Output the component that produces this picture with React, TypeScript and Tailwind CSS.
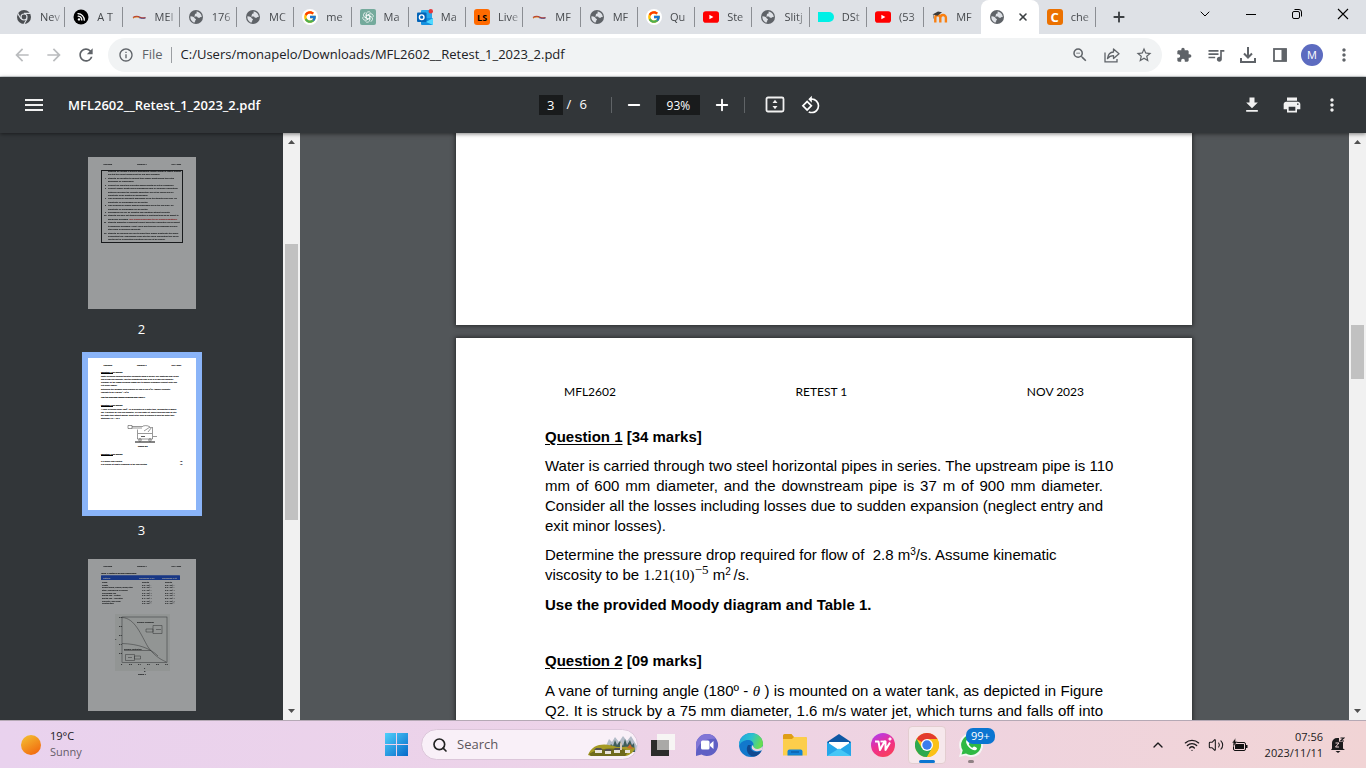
import type { ReactNode } from "react";
import {
  MdArrowBack,
  MdArrowForward,
  MdFileDownload,
  MdInfoOutline,
  MdMenu,
  MdMoreVert,
  MdPrint,
  MdQueueMusic,
  MdRefresh,
  MdRotate90DegreesCcw,
  MdStarBorder,
  MdZoomOut,
} from "react-icons/md";
import { FcGoogle } from "react-icons/fc";
import { ChevronDown, ChevronUp, Minus, Plus, Search, Volume2, Wifi, X } from "lucide-react";

/* ---------- favicons ---------- */

const Globe = () => (
  <svg viewBox="0 0 16 16" className="size-4">
    <circle cx="8" cy="8" r="7" fill="#5f6368" />
    <path d="M8.500 2.300c1.300.2 2.500.8 3.400 1.700-.2 1-.8 1.400-1.700 1.500-.5 1.300-1.500 1-2 1.500-.2 1 .6.8 2 .8 1 0 1.300.9 1.300 1.700 1 .2 1.900-.1 2.100-.3-.3 1.500-1.500 3.300-3 4-.9-.3-.7-1.500-1.300-2.300-1.200-.3-1.500-1-1.400-2-1.200-.4-1.200-1.200-2-1.900C5 6.200 4 6.500 3 6.200 4 3.800 6.200 2.300 8.500 2.300z" fill="#5f6368" />
    <path d="M8.600 2.400c-.4.900.3 1.100.2 1.800-1 .3-1.800.3-2 1.200.5.900 0 1.300-.8 1.500.3.800 1.100.5 2 .6 1.100 0 1.600.5 1.900 1.300 1.100.1 2.100.1 2.500-.8.600-.1 1.100 0 1.400.2C13.800 5.300 11.600 2.700 8.600 2.400z" fill="#dee1e6" />
    <path d="M2.400 7.400c1.600-.2 3.500.6 4.200 1.700.1.900 1.300.5 1.400 1.400-.3.800-.9.900-.8 1.800-.3.400-.5.800-.5 1.300C4.200 13 2.100 10.500 2.400 7.400z" fill="#dee1e6" />
  </svg>
);

const ChromeGrey = () => (
  <svg viewBox="0 0 16 16" className="size-4">
    <circle cx="8" cy="8" r="7" fill="#4a4d51" />
    <circle cx="8" cy="8" r="3.6" fill="#dee1e6" />
    <circle cx="8" cy="8" r="2.4" fill="#4a4d51" />
    <path d="M8 4.4H14.4M4.9 9.8 1.7 4.4M11.1 9.8 7.9 15.2" stroke="#dee1e6" strokeWidth="1.1" />
  </svg>
);

const BlackDot = () => (
  <svg viewBox="0 0 16 16" className="size-4">
    <circle cx="8" cy="8" r="7.5" fill="#000" />
    <g fill="none" stroke="#fff" strokeWidth="1.3" strokeLinecap="round">
      <path d="M5 4.6a6.5 6.5 0 0 1 6.3 6.6M5.2 7.2a4 4 0 0 1 3.6 3.8" />
    </g>
    <circle cx="6" cy="10.4" r="1.2" fill="#fff" />
  </svg>
);

const Wave = () => (
  <svg viewBox="0 0 16 16" className="size-4">
    <path d="M2 8.600C4.500 7 6.500 7 8.500 8S12.500 9.200 14.500 8.600" fill="none" stroke="#b3392f" strokeWidth="1.300" />
    <path d="M2 9.200C4 8 6 7.800 8 8.600" fill="none" stroke="#e08a2c" strokeWidth="0.800" />
    <path d="M8 8.600C10 9.700 12.500 9.700 14.500 8.900" fill="none" stroke="#44407f" strokeWidth="0.800" />
  </svg>
);

const GoogleFav = () => (
  <span className="grid size-4 place-items-center rounded-full bg-white">
    <FcGoogle className="size-[14px]" />
  </span>
);

const ChatFav = () => (
  <svg viewBox="0 0 16 16" className="size-4">
    <rect width="16" height="16" rx="2" fill="#74aa9c" />
    <g fill="none" stroke="#fff" strokeWidth="0.7">
      {[0, 60, 120, 180, 240, 300].map((a) => (
        <path key={a} transform={`rotate(${a} 8 8)`} d="M6.200 9V5.200a2.500 2.500 0 0 1 4.300-1.700M6.200 6.900 9.500 5" />
      ))}
    </g>
  </svg>
);

const OutlookFav = () => (
  <svg viewBox="0 0 16 16" className="size-4">
    <rect x="4" y="1" width="11" height="12" rx="1" fill="#28a8ea" />
    <path d="M4 9h12v6a1 1 0 0 1-1 1H5a1 1 0 0 1-1-1z" fill="#1490df" />
    <path d="m16 9-7 4 7 3z" fill="#50d9ff" />
    <rect x="0" y="3.500" width="9.500" height="9.500" rx="1" fill="#0364b8" />
    <circle cx="4.700" cy="8.200" r="2.300" fill="none" stroke="#fff" strokeWidth="1.400" />
    <circle cx="13.800" cy="2.200" r="2.200" fill="#e5393b" />
  </svg>
);

const LetterFav = ({ label, className }: { label: string; className: string }) => (
  <span className={`grid size-4 place-items-center rounded-[3px] font-bold leading-none ${className}`}>{label}</span>
);

const YouTube = () => (
  <svg viewBox="0 0 16 16" className="size-4">
    <rect y="2.300" width="16" height="11.400" rx="2.800" fill="#f00" />
    <path d="M6.400 5.700v4.600L10.400 8z" fill="#fff" />
  </svg>
);

const Dstv = () => (
  <svg viewBox="0 0 16 16" className="size-4">
    <path d="M0 3h11a5 5 0 0 1 0 10H0z" fill="#00f0e6" />
  </svg>
);

const Moodle = () => (
  <svg viewBox="0 0 16 16" className="size-4">
    <path d="M3.300 13.500V8.800a2.500 2.500 0 0 1 5 0v4.700M8.300 8.800a2.700 2.700 0 0 1 5.600 0v4.700" fill="none" stroke="#f98012" strokeWidth="2.400" />
    <path d="M0.500 5.500 6 2.500l4 .8-4.500 3.500z" fill="#3c3c3c" />
    <path d="M1.500 5.500v4" stroke="#777" strokeWidth="0.700" />
  </svg>
);

/* ---------- tab strip ---------- */

type Tab = { title: string; icon: ReactNode; active?: boolean };

const tabs: Tab[] = [
  { title: "Nev", icon: <ChromeGrey /> },
  { title: "A T", icon: <BlackDot /> },
  { title: "MEI", icon: <Wave /> },
  { title: "176", icon: <Globe /> },
  { title: "MC", icon: <Globe /> },
  { title: "me", icon: <GoogleFav /> },
  { title: "Ma", icon: <ChatFav /> },
  { title: "Ma", icon: <OutlookFav /> },
  { title: "Live", icon: <LetterFav label="LS" className="bg-[#ff6a00] text-[9px] text-black" /> },
  { title: "MF", icon: <Wave /> },
  { title: "MF", icon: <Globe /> },
  { title: "Qu", icon: <GoogleFav /> },
  { title: "Ste", icon: <YouTube /> },
  { title: "Slitj", icon: <Globe /> },
  { title: "DSt", icon: <Dstv /> },
  { title: "(53", icon: <YouTube /> },
  { title: "MF", icon: <Moodle /> },
  { title: "", icon: <Globe />, active: true },
  { title: "che", icon: <LetterFav label="C" className="bg-[#eb7100] text-[13px] text-white" /> },
];

function TabStrip() {
  return (
    <div className="flex h-[34px] shrink-0 bg-[#dee1e6] pl-2">
      <div role="tablist" className="grid w-[1088px] min-w-0 auto-cols-fr grid-flow-col">
        {tabs.map((t, i) =>
          t.active ? (
            <div key={i} className="flex min-w-0 items-center justify-between rounded-t-lg bg-white px-2">
              {t.icon}
              <button aria-label="Close tab" className="grid size-4 place-items-center text-[#3c4043]">
                <X className="size-3" strokeWidth={3.200} />
              </button>
            </div>
          ) : (
            <button key={i} role="tab" className="flex min-w-0 items-center pl-2 text-left text-[11px] text-[#45484c]">
              <span className="mr-2 shrink-0">{t.icon}</span>
              <span className="min-w-0 flex-1 whitespace-nowrap [mask-image:linear-gradient(to_right,black_60%,rgba(0,0,0,0.3))]">
                {t.title}
              </span>
              <span className={`ml-1 h-5 w-px shrink-0 ${tabs[i + 1]?.active ? "" : "bg-[#8b8e93]"}`} />
            </button>
          ),
        )}
      </div>
      <button aria-label="New tab" className="grid w-[46px] place-items-center text-[#3c4043]">
        <Plus className="size-4" strokeWidth={2.800} />
      </button>
      <div className="ml-auto flex h-7 text-black">
        <button aria-label="Search tabs" className="grid w-[46px] place-items-center">
          <ChevronDown className="size-4" strokeWidth={1.500} />
        </button>
        <button aria-label="Minimize" className="grid w-[46px] place-items-center">
          <span className="h-px w-[10px] bg-black" />
        </button>
        <button aria-label="Restore" className="grid w-[46px] place-items-center">
          <svg viewBox="0 0 12 12" className="size-3" fill="none" stroke="#000">
            <rect x="1.500" y="3.500" width="7" height="7" rx="1.500" />
            <path d="M3.500 1.500h4.500a2.500 2.500 0 0 1 2.500 2.500v4.500" />
          </svg>
        </button>
        <button aria-label="Close" className="grid w-[46px] place-items-center">
          <svg viewBox="0 0 12 12" className="size-3" stroke="#000" strokeWidth="1.100">
            <path d="m1 1 10 10M11 1 1 11" />
          </svg>
        </button>
      </div>
    </div>
  );
}

/* ---------- address bar ---------- */

const BarButton = ({ label, children }: { label: string; children: ReactNode }) => (
  <button aria-label={label} className="grid size-8 shrink-0 place-items-center">
    {children}
  </button>
);

function AddressBar() {
  return (
    <div className="flex h-[43px] shrink-0 items-center border-b border-[#d8dcdf] bg-white px-[6px] text-[#5f6368]">
      <BarButton label="Back"><MdArrowBack className="size-5 text-[#babcbe]" /></BarButton>
      <BarButton label="Forward"><MdArrowForward className="size-5 text-[#babcbe]" /></BarButton>
      <BarButton label="Reload"><MdRefresh className="size-5" /></BarButton>
      <div className="mx-[6px] flex h-[34px] min-w-0 flex-1 items-center rounded-full bg-[#f1f3f4] pl-[10px] pr-[2px]">
        <MdInfoOutline className="size-4 shrink-0" />
        <label htmlFor="url" className="ml-2 text-[13px]">File</label>
        <span className="ml-2 h-4 w-px bg-[#9b9ea2]" />
        <input
          id="url"
          defaultValue="C:/Users/monapelo/Downloads/MFL2602__Retest_1_2023_2.pdf"
          className="ml-[9px] min-w-0 flex-1 bg-transparent text-[13px] text-[#202124] outline-none"
        />
        <BarButton label="Zoom"><MdZoomOut className="size-[18px]" /></BarButton>
        <BarButton label="Share">
          <svg viewBox="0 0 18 18" className="size-[18px]" fill="none" stroke="#5f6368" strokeWidth="1.300">
            <path d="M2 6.500v9.300h12v-2.800" />
            <path d="M10.500 3v3C7 6.200 5 8.500 4.500 12.500 6 10.500 8 9.600 10.500 9.600v3L16 7.800z" strokeLinejoin="round" />
          </svg>
        </BarButton>
        <BarButton label="Bookmark"><MdStarBorder className="size-[18px]" /></BarButton>
      </div>
      <BarButton label="Extensions">
        <svg viewBox="0 0 24 24" className="size-4" fill="#5f6368">
          <path d="M20.5 11H19V7c0-1.100-.9-2-2-2h-4V3.500C13 2.120 11.880 1 10.500 1S8 2.120 8 3.500V5H4c-1.100 0-1.990.9-1.990 2v3.800H3.500c1.490 0 2.700 1.210 2.700 2.700s-1.210 2.700-2.700 2.700H2V20c0 1.100.9 2 2 2h3.800v-1.500c0-1.490 1.210-2.700 2.700-2.700s2.700 1.210 2.700 2.700V22H17c1.100 0 2-.9 2-2v-4h1.500c1.380 0 2.500-1.120 2.500-2.500S21.880 11 20.500 11z" />
        </svg>
      </BarButton>
      <BarButton label="Media"><MdQueueMusic className="size-5" /></BarButton>
      <BarButton label="Downloads">
        <svg viewBox="0 0 16 16" className="size-4" fill="none" stroke="#5f6368" strokeWidth="2">
          <path d="M8 0v10M4 6.500l4 4 4-4M1 11v4h14v-4" />
        </svg>
      </BarButton>
      <BarButton label="Side panel">
        <svg viewBox="0 0 14 14" className="size-[14px]">
          <rect x="1" y="1" width="12" height="12" fill="none" stroke="#5f6368" strokeWidth="1.800" />
          <rect x="8.500" y="1" width="5" height="12" fill="#5f6368" />
        </svg>
      </BarButton>
      <BarButton label="Profile">
        <span className="grid size-[22px] place-items-center rounded-full bg-[#5c6bc0] text-[11px] text-white">M</span>
      </BarButton>
      <BarButton label="Menu"><MdMoreVert className="size-5" /></BarButton>
    </div>
  );
}

/* ---------- PDF toolbar ---------- */

function PdfToolbar() {
  return (
    <header className="relative z-10 grid h-14 shrink-0 grid-cols-[1fr_auto_1fr] items-center bg-[#323639] px-[18px] text-[#f1f1f1] shadow-[0_1px_4px_rgba(0,0,0,0.5)]">
      <div className="flex items-center gap-[18px]">
        <BarButton label="Toggle sidebar"><MdMenu className="size-6" /></BarButton>
        <h1 className="pt-[2px] text-[13px] font-semibold text-white">MFL2602__Retest_1_2023_2.pdf</h1>
      </div>
      <div className="flex items-center text-[13px] text-white">
        <input aria-label="Page" defaultValue="3" className="h-5 w-6 bg-[#191b1c] text-center outline-none" />
        <span className="ml-1">/</span>
        <span className="ml-2 w-8">6</span>
        <span className="ml-auto h-4 w-px bg-[#606467]" />
        <span className="ml-[6px] flex items-center gap-[6px]">
          <BarButton label="Zoom out"><Minus className="size-[18px]" strokeWidth={2.500} /></BarButton>
          <input aria-label="Zoom level" defaultValue="93%" className="h-5 w-11 bg-[#191b1c] text-center text-xs outline-none" />
          <BarButton label="Zoom in"><Plus className="size-[18px]" strokeWidth={2.500} /></BarButton>
          <span className="h-4 w-px bg-[#606467]" />
        </span>
        <span className="ml-[14px] flex gap-1">
          <BarButton label="Fit to page">
            <svg viewBox="0 0 20 18" className="h-[18px] w-5">
              <rect x="1.500" y="1.500" width="17" height="14" rx="1.500" fill="none" stroke="#f1f1f1" strokeWidth="1.800" />
              <path d="M10 3.700 7.500 7h5zM10 13.300 7.500 10h5z" fill="#f1f1f1" />
            </svg>
          </BarButton>
          <BarButton label="Rotate"><MdRotate90DegreesCcw className="size-5" /></BarButton>
        </span>
      </div>
      <div className="flex justify-end gap-2">
        <BarButton label="Download"><MdFileDownload className="size-5" /></BarButton>
        <BarButton label="Print"><MdPrint className="size-5" /></BarButton>
        <BarButton label="More"><MdMoreVert className="size-5" /></BarButton>
      </div>
    </header>
  );
}

/* ---------- thumbnails ---------- */

type Line = [x: number, y: number, text: string, bold?: boolean];

const MiniText = ({ lines, fill = "#000" }: { lines: Line[]; fill?: string }) => (
  <g fill={fill} stroke={fill} strokeWidth="0.100" fontFamily="Liberation Sans, Arial, sans-serif" fontSize="2.050">
    {lines.map(([x, y, text, bold]) => (
      <text key={`${x}-${y}`} x={x} y={y} fontWeight={bold ? 700 : 400}>{text}</text>
    ))}
  </g>
);

const ThumbPage = ({ children }: { children: ReactNode }) => (
  <svg viewBox="0 0 108 152" className="h-[152px] w-[108px]" aria-hidden="true">
    <MiniText lines={[[15.500, 8, "MFL2602"], [49, 8, "RETEST 1"], [83.500, 8, "NOV 2023"]]} />
    {children}
  </svg>
);

const rules: Line[] = [
  [20, 15.300, "Students are advised to preview submissions (answer scripts) to ensure legibility"],
  [20, 18.200, "and that the correct answer script file has been uploaded."],
  [17, 22, "4"], [20, 22, "Students are permitted to resubmit their answer scripts should their initial"],
  [20, 25.200, "submission be unsuccessful."],
  [17, 29, "5"], [20, 29, "Incorrect file format and uncollated answer scripts will not be considered."],
  [17, 32.200, "6"], [20, 32.200, "Incorrect answer scripts and/or submissions made on unofficial examinations"],
  [20, 36, "platforms (including the invigilator application) will not be marked and no"],
  [20, 39.200, "opportunity will be granted for resubmission."],
  [17, 42.200, "7"], [20, 42.200, "Mark awarded for incomplete submission will be the student's final mark. No"],
  [20, 46, "opportunity for resubmission will be granted."],
  [17, 49.200, "8"], [20, 49.200, "Mark awarded for illegible scanned submission will be the final mark. No"],
  [20, 53, "opportunity for resubmission will be granted."],
  [17, 56.200, "9"], [20, 56.200, "Submissions will only be accepted from registered student accounts."],
  [16, 59.200, "10"], [20, 59.200, "Students who have not utilised invigilation or proctoring tools will be subject to"],
  [20, 63.200, "disciplinary processes."],
  [16, 66.200, "11"], [20, 66.200, "Students suspected of dishonest conduct during the examination will be subject"],
  [20, 70.200, "to disciplinary processes. UNISA has a zero tolerance for plagiarism and any"],
  [20, 73.200, "other forms of academic dishonesty."],
  [16, 77.200, "12"], [20, 77.200, "Students are provided one hour to submit their answer scripts after the official"],
  [20, 80.200, "examination time. Submissions made after the official examination time will be"],
  [20, 83.200, "rejected by the examination regulations and will not be marked."],
];

const ThumbTwo = () => (
  <ThumbPage>
    <MiniText lines={rules} />
    <MiniText fill="#d21414" lines={[[41, 63.200, "(only modules applicable to your modules registered)."]]} />
    <rect x="13.500" y="13.500" width="81" height="72" fill="none" stroke="#000" />
  </ThumbPage>
);

const pageLines: Line[] = [
  [13, 15, "Question 1 [34 marks]", true],
  [13, 19, "Water is carried through two steel horizontal pipes in series. The upstream pipe is 110"],
  [13, 22, "mm of 600 mm diameter, and the downstream pipe is 37 m of 900 mm diameter."],
  [13, 25, "Consider all the losses including losses due to sudden expansion (neglect entry and"],
  [13, 28, "exit minor losses)."],
  [13, 32, "Determine the pressure drop required for flow of 2.8 m³/s. Assume kinematic"],
  [13, 35, "viscosity to be 1.21(10)⁻⁵ m²/s."],
  [13, 40, "Use the provided Moody diagram and Table 1.", true],
  [13, 48, "Question 2 [09 marks]", true],
  [13, 52, "A vane of turning angle (180º - θ) is mounted on a water tank, as depicted in Figure"],
  [13, 55, "Q2. It is struck by a 75 mm diameter, 1.6 m/s water jet, which turns and falls off into"],
  [13, 58, "the water tank without spilling. What is the force F required to hold the water tank"],
  [13, 61, "stationary if θ = 45°?"],
  [50, 89, "Figure Q2", true],
  [13, 97, "Question 3 [05 marks]", true],
  [13, 104, "3.1 Define flow cavities."],
  [92, 104, "(2)"],
  [13, 107, "3.2 Provide at least 3 examples of the flow cavities."],
  [92, 107, "(3)"],
];

const ThumbThree = () => (
  <ThumbPage>
    <MiniText lines={pageLines} />
    <path d="M13 15.500h12M13 48.500h12M13 97.500h12" stroke="#000" />
    <g fill="none" stroke="#333" strokeWidth="0.500">
      <path d="M40 67.500h4v3h-4zM44 68.500h11M44 70h10M55 68c4-1 6 0 8 2M49.500 71.500v9.500h15V69M50 75.500h14M56 73l6-4M60 74l4-5M65 78.500h4" />
      <circle cx="52" cy="82" r="1.300" />
      <circle cx="62" cy="82" r="1.300" />
      <path d="M47 84h20" strokeWidth="1.200" />
      <path d="M53 78.500h4" strokeWidth="0.800" />
    </g>
  </ThumbPage>
);

const materials: [string, string, string][] = [
  ["Glass", "Smooth", "Smooth"],
  ["Plastic", "3.0 × 10⁻⁷", "1.0 × 10⁻⁶"],
  ["Drawn tubing; copper, brass, steel", "1.5 × 10⁻⁶", "5.0 × 10⁻⁶"],
  ["Steel, commercial or welded", "4.6 × 10⁻⁵", "1.5 × 10⁻⁴"],
  ["Galvanized iron", "1.5 × 10⁻⁴", "5.0 × 10⁻⁴"],
  ["Ductile iron—coated", "1.2 × 10⁻⁴", "4.0 × 10⁻⁴"],
  ["Ductile iron—uncoated", "2.4 × 10⁻⁴", "8.0 × 10⁻⁴"],
  ["Concrete, well made", "1.2 × 10⁻⁴", "4.0 × 10⁻⁴"],
  ["Riveted steel", "1.8 × 10⁻³", "6.0 × 10⁻³"],
];

const tableLines: Line[] = materials.flatMap(([name, metric, imperial], i): Line[] => {
  const y = 24.200 + i * 2.620;
  return [[14, y, name], [54, y, metric], [77, y, imperial]];
});

const ThumbFour = () => (
  <ThumbPage>
    <MiniText lines={[[13, 15, "Table 1: Material surface Roughness", true], ...tableLines]} />
    <rect x="13" y="16.300" width="79" height="4.700" rx="0.500" fill="#0038d0" />
    <MiniText fill="#dfe8ff" lines={[[15, 19.800, "Material"], [51, 19.800, "Roughness ε (m)"], [74, 19.800, "Roughness ε (ft)"]]} />
    <rect x="27" y="55" width="55" height="57" fill="#f1f3ee" />
    <g fill="none" stroke="#333" strokeWidth="0.500">
      <rect x="34" y="58" width="45" height="45.500" />
      <path d="M34 58.500C47 59 53 76 60 88 65 95 71 100 78.500 103" />
      <path d="M34 84.500C50 85 62 89 70 97" />
      <path d="M58 70h7v3h-7zM65 66.500h9v8h-9zM37.500 95.500h9v6h-9zM46.500 97h6v3h-6zM68 70.500h5M40 98.500h4M36 91.500h27" />
    </g>
    <MiniText
      lines={[
        [49, 64.200, "Sudden expansion"], [36, 91.300, "Sudden contraction"], [31, 59, "1.0"], [31, 68, "0.8"], [31, 77, "0.6"],
        [31, 86, "0.4"], [31, 95, "0.2"], [33, 106, "0"], [41, 106, "0.2"], [50, 106, "0.4"], [59, 106, "0.6"], [68, 106, "0.8"],
        [77, 106, "1.0"], [27, 81, "K"], [56, 110, "d"], [56, 112.500, "D"], [50, 115.500, "Figure 1", true],
      ]}
    />
  </ThumbPage>
);

const thumbs = [
  { page: 2, art: <ThumbTwo /> },
  { page: 3, art: <ThumbThree />, selected: true },
  { page: 4, art: <ThumbFour /> },
];

const Scrollbar = ({ thumb }: { thumb: string }) => (
  <div className="flex w-[17px] shrink-0 flex-col items-center bg-[#f1f1f1]">
    <svg viewBox="0 0 17 17" className="size-[17px] shrink-0"><path d="M5 11h7L8.500 7z" fill="#505050" /></svg>
    <div className="min-h-0 flex-1">
      <div className={`w-[13px] bg-[#c1c1c1] ${thumb}`} />
    </div>
    <svg viewBox="0 0 17 17" className="size-[17px] shrink-0"><path d="M5 6h7l-3.500 4z" fill="#505050" /></svg>
  </div>
);

function Sidebar() {
  return (
    <aside className="flex w-[300px] shrink-0 bg-[#323639]">
      <div className="flex min-w-0 flex-1 flex-col items-center overflow-hidden pt-6">
        {thumbs.map((t) => (
          <button key={t.page} aria-label={`Page ${t.page}`} className="mb-[9px] flex flex-col items-center gap-[10px]">
            <span className={t.selected ? "bg-white ring-6 ring-[#8ab4f8]" : "bg-white opacity-50"}>{t.art}</span>
            <span className="h-[30px] text-[13px] leading-5 text-white">{t.page}</span>
          </button>
        ))}
      </div>
      <Scrollbar thumb="mt-[94px] h-[276px]" />
    </aside>
  );
}

/* ---------- document ---------- */

const Justified = ({ lines }: { lines: string[] }) => (
  <>
    {lines.map((l) => (
      <span key={l} className="block whitespace-nowrap [text-align-last:justify]">{l}</span>
    ))}
  </>
);

function Document() {
  return (
    <main className="flex min-w-0 flex-1 bg-[#525659]">
      <div className="flex min-w-0 flex-1 flex-col items-center overflow-hidden pr-px">
        <div className="h-48 w-[736px] shrink-0 bg-white shadow-[0_0_4px_1px_rgba(0,0,0,0.5)]" />
        <article className="mt-[13px] w-[736px] shrink-0 bg-white px-[89px] pb-24 pt-11 font-['Liberation_Sans',Arial,sans-serif] text-[15px] leading-5 text-black shadow-[0_0_4px_1px_rgba(0,0,0,0.5)]">
          <div className="flex justify-between px-[19px] font-[Lato,sans-serif] text-xs leading-5">
            <span>MFL2602</span>
            <span>RETEST 1</span>
            <span>NOV 2023</span>
          </div>
          <h2 className="mt-[25px] font-bold"><span className="underline underline-offset-2">Question 1</span> [34 marks]</h2>
          <p className="mt-[9px]">
            <Justified
              lines={[
                "Water is carried through two steel horizontal pipes in series. The upstream pipe is 110",
                "mm of 600 mm diameter, and the downstream pipe is 37 m of 900 mm diameter.",
                "Consider all the losses including losses due to sudden expansion (neglect entry and",
              ]}
            />
            exit minor losses).
          </p>
          <p className="mt-[9px]">
            Determine the pressure drop required for flow of&nbsp; 2.8 m<sup className="text-[10px] leading-none">3</sup>/s. Assume kinematic
            <br />
            viscosity to be <span className="font-['Liberation_Serif',serif]">1.21(10)<sup className="text-[13px] leading-none">−5</sup></span> m
            <sup className="text-[10px] leading-none">2 </sup>/s.
          </p>
          <p className="mt-[10px] font-bold">Use the provided Moody diagram and Table 1.</p>
          <h2 className="mt-9 font-bold"><span className="underline underline-offset-2">Question 2</span> [09 marks]</h2>
          <p className="mt-[10px]">
            <span className="block whitespace-nowrap [text-align-last:justify]">
              A vane of turning angle (180º - <i className="font-['Liberation_Serif',serif]">θ</i> ) is mounted on a water tank, as depicted in Figure
            </span>
            <Justified lines={["Q2. It is struck by a 75 mm diameter, 1.6 m/s water jet, which turns and falls off into"]} />
          </p>
        </article>
      </div>
      <Scrollbar thumb="mt-[175px] h-[54px]" />
    </main>
  );
}

/* ---------- taskbar ---------- */

const TaskButton = ({ label, children }: { label: string; children: ReactNode }) => (
  <button aria-label={label} className="relative grid h-12 w-11 shrink-0 place-items-center">{children}</button>
);

const ChromeLogo = () => (
  <svg viewBox="0 0 24 24" className="size-6">
    <circle cx="12" cy="12" r="12" fill="#fbc116" />
    <path d="M12 12 1.600 6A12 12 0 0 1 22.400 6H12z" fill="#e33b2e" />
    <path d="M1.600 6A12 12 0 0 0 12 24l5.200-9L12 12 6.800 15z" fill="#2da94f" />
    <path d="M12 6h10.400A12 12 0 0 1 12 24l5.200-9z" fill="#fbc116" />
    <circle cx="12" cy="12" r="6" fill="#fff" />
    <circle cx="12" cy="12" r="4.700" fill="#3b7ded" />
  </svg>
);

function Taskbar() {
  return (
    <footer className="grid h-12 shrink-0 grid-cols-[1fr_auto_1fr] items-center border-t border-[#b5a9b5] bg-linear-to-r from-[#e9d2ee] via-[#edd3e8] via-45% to-[#f1d4d5]">
      <button className="flex items-center gap-[9px] pl-[21px] text-left text-xs leading-4">
        <svg viewBox="0 0 20 20" className="size-5">
          <defs>
            <linearGradient id="sun" x1="0.200" y1="0" x2="0.800" y2="1">
              <stop offset="0" stopColor="#f3bd31" />
              <stop offset="1" stopColor="#f2660d" />
            </linearGradient>
          </defs>
          <circle cx="10" cy="10" r="10" fill="url(#sun)" />
        </svg>
        <span className="flex flex-col pb-[2px] text-[#1b1a1c]">
          <span className="text-[11px]">19°C</span>
          <span className="text-[11px] text-[#665d68]">Sunny</span>
        </span>
      </button>

      <nav className="flex h-12 items-center pb-px pl-px">
        <TaskButton label="Start">
          <svg viewBox="0 0 23 23" className="size-[23px]">
            <defs>
              <linearGradient id="win" x1="0" y1="0" x2="1" y2="1">
                <stop offset="0" stopColor="#4fd0fb" />
                <stop offset="1" stopColor="#0669c9" />
              </linearGradient>
            </defs>
            <path d="M0 0h11v11H0zM12 0h11v11H12zM0 12h11v11H0zM12 12h11v11H12z" fill="url(#win)" />
          </svg>
        </TaskButton>
        <label className="mx-[3px] flex h-[31px] w-[217px] items-center overflow-hidden rounded-full border border-[#dcc6da] bg-[#f9f0f8] pl-[10px]">
          <Search className="size-4 shrink-0 text-[#222]" strokeWidth={2.500} />
          <input
            type="search"
            aria-label="Search"
            placeholder="Search"
            className="ml-[9px] w-0 flex-1 bg-transparent text-[13px] outline-none placeholder:text-[#5c575c]"
          />
          <svg viewBox="0 0 50 24" className="h-6 w-[50px] shrink-0">
            <path d="M18 15 22 6l3 3 3-5 4 5 4-6 4 5 4-5 6 10v6H18z" fill="#b3bcc8" />
            <path d="M22 15l2-4 2 2 2-6 2 5 3-4 3 5 2-7 2 6 3-5 2 5 2-2 1 9H22z" fill="#3f5d5b" />
            <path d="M1 22C6 10 18 10 30 14c8 0 14-1 18 1-1 4-5 7-9 8H4z" fill="#a59a25" />
            <path d="M2 21c8-6 30-7 40-3l-4 5H4z" fill="#6f6b1c" />
            <path d="M8 17h7v3H8zM18 18h6v3h-6zM27 17h6v3h-6zM38 17h5v3h-5z" fill="#e9e4dc" />
            <path d="m7 17 2-2h5l2 2zM17 18l2-2h4l2 2zM26 17l2-2h5l2 2z" fill="#54504f" />
            <path d="M33 17v-6l1-3 1 3v6z" fill="#d8c9b8" />
            <path d="m40 15 3-4 3 5z" fill="#c76a2b" />
          </svg>
        </label>
        <TaskButton label="Task view">
          <svg viewBox="0 0 24 24" className="size-6">
            <path d="M0 7h18v16H0z" fill="#2c2c2b" />
            <path d="M6 1h18v16H6z" fill="#f7f5f4" />
            <path d="M6 7h12v10H6z" fill="#aaa9a7" />
          </svg>
        </TaskButton>
        <TaskButton label="Chat">
          <svg viewBox="0 0 24 24" className="size-6">
            <path d="M12 1a11 11 0 1 1-5.500 20.500L1 23V12A11 11 0 0 1 12 1z" fill="#5f60c4" />
            <path d="M12 1A11 11 0 0 0 1 12v8C3 9 12 5 21 6a11 11 0 0 0-9-5z" fill="#8176d6" />
            <rect x="6" y="7.500" width="8.500" height="9" rx="1.500" fill="#fff" />
            <path d="m15 11 3.500-3v8L15 13z" fill="#fff" />
          </svg>
        </TaskButton>
        <TaskButton label="Edge">
          <svg viewBox="0 0 24 24" className="size-6">
            <defs>
              <linearGradient id="edge" x1="0" y1="0" x2="1" y2="0.300">
                <stop offset="0" stopColor="#1fa3df" />
                <stop offset="0.550" stopColor="#2cc1cf" />
                <stop offset="1" stopColor="#67dc52" />
              </linearGradient>
            </defs>
            <circle cx="12" cy="12" r="12" fill="#1278cc" />
            <path d="M0 11C1 4 6 0 12 0c7 0 12 5 12 10.500 0 4-3 6-6.500 6-2.500 0-4-1-4-2 0-1 1-1.500 1-3C14.500 9 12 7 9 7 5 7 1 9 0 14z" fill="url(#edge)" />
            <path d="M9 12c-3 5 0 11 6 11.600 3-.6 6-2.600 7.500-5.600-3 1.500-7 1.500-9.500-.5C11 16 11 13.500 12 12z" fill="#104a91" />
            <path d="M13.500 12c-1.500 2-1 5 3 6 2.500.5 5 0 6.500-1 .5-.5 1 0 .5.700-.5-.2 0 0 .5-4.700-2 3-9 5-10.500-1z" fill="#e9d4de" />
          </svg>
        </TaskButton>
        <TaskButton label="File Explorer">
          <svg viewBox="0 0 24 24" className="size-6">
            <path d="M0 2.500A1.500 1.500 0 0 1 1.500 1h7L11 4h11a2 2 0 0 1 2 2v4H0z" fill="#df9e16" />
            <path d="M0 6h9l2-2h11.500A1.500 1.500 0 0 1 24 5.500V22.500H0z" fill="#fcce4b" />
            <path d="M4.500 22.500V18.500a2 2 0 0 1 2-2h11a2 2 0 0 1 2 2v4z" fill="#1283d6" />
            <path d="M8 19h8" stroke="#0b5ca6" strokeWidth="1.300" />
          </svg>
        </TaskButton>
        <TaskButton label="Mail">
          <svg viewBox="0 0 24 24" className="size-6">
            <path d="M0 9 12 1l12 8v3H0z" fill="#0d57a3" />
            <path d="M2 9h20v5l-10 5L2 14z" fill="#fff" />
            <path d="m0 9 12 8L24 9v14H0z" fill="#25a6e9" />
            <path d="M0 23 12 15.500 24 23z" fill="#46c7f6" />
          </svg>
        </TaskButton>
        <TaskButton label="WPS Office">
          <svg viewBox="0 0 24 24" className="size-6">
            <defs>
              <linearGradient id="wps" x1="0.200" y1="0" x2="0.700" y2="1">
                <stop offset="0" stopColor="#b03df0" />
                <stop offset="0.500" stopColor="#ee2e91" />
                <stop offset="1" stopColor="#fa4058" />
              </linearGradient>
            </defs>
            <circle cx="12" cy="12" r="12" fill="url(#wps)" />
            <path d="M4 8.500h3.500L9 17l4.500-8.500h1L14.500 17 19 9.500" fill="none" stroke="#fff" strokeWidth="2" strokeLinejoin="round" />
            <path d="M9.500 8.500h5" stroke="#fff" strokeWidth="1.800" />
            <path d="m19 3.500.7 1.800 1.800.7-1.800.7L19 8.500l-.7-1.800-1.800-.7 1.800-.7z" fill="#fff" />
          </svg>
        </TaskButton>
        <TaskButton label="Chrome">
          <span className="grid h-[38px] w-[38px] place-items-center rounded border border-[#e3cdd0] bg-[#f6e8ec]">
            <ChromeLogo />
          </span>
          <span className="absolute bottom-[6px] left-[14px] h-[3px] w-4 rounded-full bg-[#0b75d1]" />
        </TaskButton>
        <TaskButton label="WhatsApp">
          <svg viewBox="0 0 24 24" className="size-6">
            <path d="M12 0a12 12 0 1 1-5.500 22.600L0 24l1.700-6A12 12 0 0 1 12 0z" fill="#f4f6f4" />
            <path d="M12 2a10 10 0 1 1-5 18.600L2.500 21.500l1.200-4.200A10 10 0 0 1 12 2z" fill="#2fb944" />
            <path d="M8.500 6.500c-3 1.500-.5 6 2 8.200s6 4 7.500 1c.3-1-2.500-2.500-3.200-2.200-.8.500-.8 1.300-1.500 1.200-1.400-.5-3-2.300-3.500-3.500-.2-.6 1-1 .9-1.800 0-.9-1.100-3-2.200-2.900z" fill="#fff" />
          </svg>
          <span className="absolute left-[17px] top-[7px] rounded-[7px] bg-[#0b75d1] px-[5px] text-[11px] leading-4 text-white">99+</span>
          <span className="absolute bottom-[6px] left-[19px] h-[3px] w-[6px] rounded-full bg-[#8f8184]" />
        </TaskButton>
      </nav>

      <div className="flex items-center justify-end pb-px pr-[21px] text-[#1b1a1c]">
        <button aria-label="Show hidden icons" className="mr-[18px]"><ChevronUp className="size-4" /></button>
        <button aria-label="Network, sound and battery" className="flex items-center gap-2">
          <Wifi className="size-4" strokeWidth={2} />
          <Volume2 className="size-4" strokeWidth={1.600} />
          <svg viewBox="0 0 16 14" className="h-[14px] w-4">
            <rect x="1.500" y="4.500" width="12" height="8" rx="1.500" fill="none" stroke="#111" />
            <path d="M3 6h9v5H3zM14 7h1.500v3H14z" fill="#111" />
            <path d="M3.500 0 0 5h2L1.500 8.500 5.500 3.500h-2z" fill="#111" stroke="#f0d3d8" strokeWidth="0.400" />
          </svg>
        </button>
        <span className="ml-[17px] text-right text-[11px] leading-4">
          <span className="block">07:56</span>
          <span className="block">2023/11/11</span>
        </span>
        <button aria-label="Notifications" className="ml-2">
          <svg viewBox="0 0 14 16" className="h-4 w-[14px]">
            <path d="M1 11.500V6a5 5 0 0 1 5-5h2v4h4v6.500l2 1.500H0zM4.500 14h5L7 16z" fill="#1b1a1c" />
            <path d="M4.500 6h3.500L4.500 10h3.500" fill="none" stroke="#f0d3d5" />
            <path d="M9.500 1h3.500l-3.500 3H13" fill="none" stroke="#1b1a1c" strokeWidth="1.100" />
          </svg>
        </button>
      </div>
    </footer>
  );
}

export default function App() {
  return (
    <div className="flex h-screen flex-col overflow-hidden font-['Open_Sans','Noto_Sans',sans-serif]">
      <TabStrip />
      <AddressBar />
      <PdfToolbar />
      <div className="flex min-h-0 flex-1">
        <Sidebar />
        <Document />
      </div>
      <Taskbar />
    </div>
  );
}
